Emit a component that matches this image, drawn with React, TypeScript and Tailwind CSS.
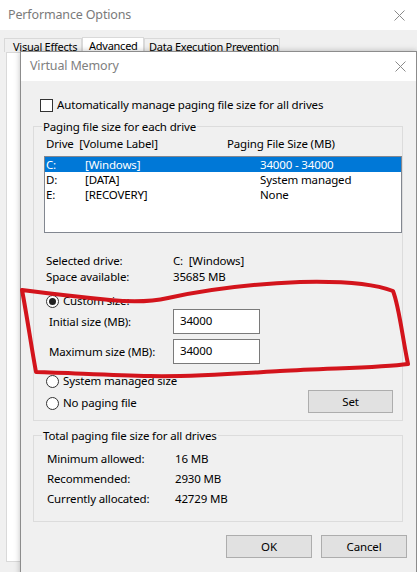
import React from "react";

const font = { fontFamily: '"Noto Sans", "Open Sans", sans-serif' };

function CloseX({ color = "#6b6b6b" }: { color?: string }) {
  return (
    <svg width="11" height="11" viewBox="0 0 11 11">
      <path d="M0.5 0.5 L10.5 10.5 M10.5 0.5 L0.5 10.5" stroke={color} strokeWidth="1" fill="none" />
    </svg>
  );
}

function Radio({ checked }: { checked?: boolean }) {
  return (
    <span className="flex h-[13px] w-[13px] shrink-0 items-center justify-center rounded-full border border-[#333] bg-white">
      {checked && <span className="h-[7px] w-[7px] rounded-full bg-[#222]" />}
    </span>
  );
}

function Btn({ label, w }: { label: string; w: string }) {
  return (
    <div className={`flex h-[23px] items-center justify-center border border-[#adadad] bg-[#e1e1e1] text-black ${w}`}>
      {label}
    </div>
  );
}

export default function App() {
  return (
    <div
      className="relative h-[572px] w-[417px] overflow-hidden bg-[#f0f0f0] text-[11.5px] leading-[16px] tracking-[-0.15px] text-black"
      style={font}
    >
      {/* Background window */}
      <div className="flex h-[30px] items-center justify-between bg-white pl-[8px] pr-[12px]">
        <span className="text-[12.5px] text-[#7a7a7a]">Performance Options</span>
        <CloseX color="#8a8a8a" />
      </div>
      <div className="ml-[4px] mt-[7px] flex items-end whitespace-nowrap text-[11px] tracking-[-0.25px]">
        <div className="h-[14px] w-[78px] border border-b-0 border-[#d9d9d9] bg-[#f0f0f0] pl-[8px] leading-[15px]">Visual Effects</div>
        <div className="-mb-[1px] h-[16px] w-[62px] border border-b-0 border-[#d9d9d9] bg-white pl-[6px] leading-[15px]">Advanced</div>
        <div className="h-[14px] w-[136px] border border-b-0 border-[#d9d9d9] bg-[#f0f0f0] pl-[4px] leading-[15px]">Data Execution Prevention</div>
      </div>
      <div className="ml-[6px] mr-[6px] h-[510px] border border-[#d9d9d9] bg-white" />

      {/* Virtual Memory dialog */}
      <div className="absolute left-[20px] top-[51px] flex h-[540px] w-[397px] flex-col border border-[#8c8c8c] bg-[#f0f0f0] shadow-[0_0_6px_rgba(0,0,0,0.25)]">
        <div className="flex h-[29px] shrink-0 items-center justify-between bg-white pl-[9px] pr-[10px]">
          <span className="-mt-[2px] text-[12.5px] text-[#808080]">Virtual Memory</span>
          <CloseX color="#8a8a8a" />
        </div>

        <div className="mt-[16px] flex items-center pl-[19px]">
          <span className="h-[13px] w-[13px] border border-[#333] bg-white" />
          <span className="ml-[4px]">Automatically manage paging file size for all drives</span>
        </div>

        <fieldset className="ml-[12px] mt-[6px] w-[370px] border border-[#dcdcdc] pb-[9px]">
          <legend className="ml-[8px] px-[1px] leading-[15px]">Paging file size for each drive</legend>
          <div className="mt-[2px] flex pl-[12px] leading-[15px]">
            <span className="w-[181px] whitespace-pre">Drive  [Volume Label]</span>
            <span>Paging File Size (MB)</span>
          </div>
          <div className="ml-[10px] mt-[5px] h-[77px] w-[358px] border border-[#828790] bg-white">
            {[
              ["C:", "[Windows]", "34000 - 34000", true],
              ["D:", "[DATA]", "System managed", false],
              ["E:", "[RECOVERY]", "None", false],
            ].map(([a, b, c, sel]) => (
              <div
                key={a as string}
                className={`flex h-[15px] items-center pl-[1px] leading-[14px] ${sel ? "bg-[#0078d7] text-white" : ""}`}
              >
                <span className="w-[39px]">{a}</span>
                <span className="w-[175px]">{b}</span>
                <span>{c}</span>
              </div>
            ))}
          </div>

          <div className="mt-[20px] flex pl-[12px]">
            <span className="w-[127px]">Selected drive:</span>
            <span className="whitespace-pre">C:  [Windows]</span>
          </div>
          <div className="flex pl-[12px]">
            <span className="w-[127px]">Space available:</span>
            <span>35685 MB</span>
          </div>

          <div className="mt-[8px] flex items-center pl-[12px]">
            <Radio checked />
            <span className="ml-[4px]">Custom size:</span>
          </div>
          <div className="flex items-center pl-[15px]">
            <span className="w-[124px]">Initial size (MB):</span>
            <div className="flex h-[25px] w-[87px] items-start border border-[#7a7a7a] bg-white pl-[6px] pt-[3px]">34000</div>
          </div>
          <div className="mt-[5px] flex items-center pl-[15px]">
            <span className="w-[124px]">Maximum size (MB):</span>
            <div className="flex h-[25px] w-[87px] items-start border border-[#7a7a7a] bg-white pl-[6px] pt-[3px]">34000</div>
          </div>

          <div className="mt-[9px] flex items-end justify-between pl-[12px] pr-[9px]">
            <div className="flex flex-col gap-[6px]">
              <div className="flex items-center">
                <Radio />
                <span className="ml-[4px]">System managed size</span>
              </div>
              <div className="flex items-center">
                <Radio />
                <span className="ml-[4px]">No paging file</span>
              </div>
            </div>
            <div className="-mb-[2px]">
              <Btn label="Set" w="w-[85px] h-[22px]" />
            </div>
          </div>
        </fieldset>

        <fieldset className="ml-[12px] mt-[7px] w-[370px] border border-[#dcdcdc] pb-[12px]">
          <legend className="ml-[8px] px-[1px] leading-[15px]">Total paging file size for all drives</legend>
          <div className="mt-[6px] flex flex-col pl-[13px] leading-[20px]">
            {[
              ["Minimum allowed:", "16 MB"],
              ["Recommended:", "2930 MB"],
              ["Currently allocated:", "42729 MB"],
            ].map(([a, b]) => (
              <div key={a} className="flex">
                <span className="w-[128px]">{a}</span>
                <span>{b}</span>
              </div>
            ))}
          </div>
        </fieldset>

        <div className="mr-[9px] mt-[13px] flex justify-end gap-[9px]">
          <Btn label="OK" w="w-[86px]" />
          <Btn label="Cancel" w="w-[86px]" />
        </div>
      </div>

      {/* Red hand-drawn annotation */}
      <svg className="pointer-events-none absolute left-0 top-0" width="417" height="572" viewBox="0 0 417 572">
        <path
          d="M22,290 C45,293 80,297 110,300 C130,302 150,302 168,298 C205,290 250,284 300,282 C340,281 372,283 393,291 C399,306 402,335 408,364 C380,368 330,368 280,371 C230,374 190,377 150,376 C110,375 70,373 36,372 C31,345 27,316 22,290"
          fill="none"
          stroke="#d3141c"
          strokeWidth="4"
          strokeLinecap="round"
          strokeLinejoin="round"
        />
      </svg>
    </div>
  );
}
